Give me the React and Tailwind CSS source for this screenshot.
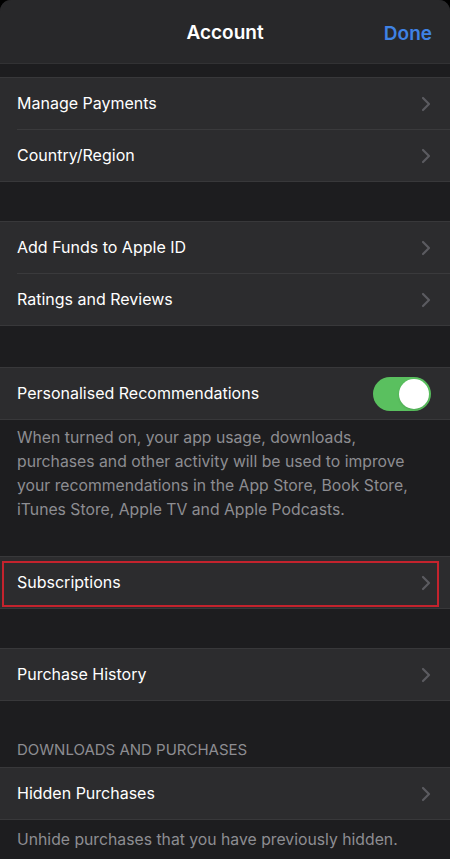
import React from "react";

const font = { fontFamily: "Inter, 'Noto Sans', sans-serif" };

function Chevron() {
  return (
    <svg width="10" height="16" viewBox="0 0 10 16" fill="none" className="shrink-0">
      <path d="M2 2 L8 8 L2 14" stroke="#5b5b60" strokeWidth="2.2" strokeLinecap="round" strokeLinejoin="round" />
    </svg>
  );
}

function Row({ label, last, right, highlight }) {
  return (
    <div className="relative bg-[#2c2c2e]">
      <div className="flex h-[51px] items-center pl-[17px] pr-[19px] pb-[2px]">
        <span className="flex-1 text-[16px] text-white">{label}</span>
        <div className="flex items-center pt-[2px]">{right ?? <Chevron />}</div>
      </div>
      {!last && <div className="ml-[17px] h-px bg-[#3a3a3c]" />}
      {highlight && (
        <div className="pointer-events-none absolute left-[2px] right-[11px] top-[4px] bottom-[1px] border-2 border-[#c4232d]" />
      )}
    </div>
  );
}

function Group({ children }) {
  return <div className="border-y border-[#38383a]">{children}</div>;
}

function Toggle() {
  return (
    <div className="flex h-[34px] w-[58px] items-center rounded-full bg-[#5ac05f] p-[2px] justify-end">
      <div className="h-[30px] w-[30px] rounded-full bg-white shadow" />
    </div>
  );
}

export default function App() {
  return (
    <div className="min-h-[859px] w-[450px] bg-black" style={font}>
      <div className="overflow-hidden rounded-t-[11px] bg-[#1d1d1f] pb-[20px]">
        <div className="relative flex h-[64px] items-center justify-center border-b border-[#323234] bg-[#28282a] pt-[3px]">
          <span className="text-[19px] font-semibold text-white">Account</span>
          <span className="absolute right-[18px] top-[20px] text-[19px] font-semibold text-[#3f82e4]">Done</span>
        </div>
        <div className="h-[13px]" />
        <Group>
          <Row label="Manage Payments" />
          <Row label="Country/Region" last />
        </Group>
        <div className="h-[39px]" />
        <Group>
          <Row label="Add Funds to Apple ID" />
          <Row label="Ratings and Reviews" last />
        </Group>
        <div className="h-[41px]" />
        <Group>
          <Row label="Personalised Recommendations" last right={<Toggle />} />
        </Group>
        <p className="px-[17px] pt-[6px] text-[15.75px] leading-[24px] text-[#8d8d92]">
          When turned on, your app usage, downloads, purchases and other activity will be used to improve your recommendations in the App Store, Book Store, iTunes Store, Apple TV and Apple Podcasts.
        </p>
        <div className="h-[34px]" />
        <Group>
          <Row label="Subscriptions" last highlight />
        </Group>
        <div className="h-[39px]" />
        <Group>
          <Row label="Purchase History" last />
        </Group>
        <div className="px-[17px] pt-[39px] pb-[7px] text-[15px] leading-[20px] text-[#8d8d92]">DOWNLOADS AND PURCHASES</div>
        <Group>
          <Row label="Hidden Purchases" last />
        </Group>
        <p className="px-[17px] pt-[8px] text-[15.75px] leading-[24px] text-[#8d8d92]">Unhide purchases that you have previously hidden.</p>
      </div>
    </div>
  );
}
